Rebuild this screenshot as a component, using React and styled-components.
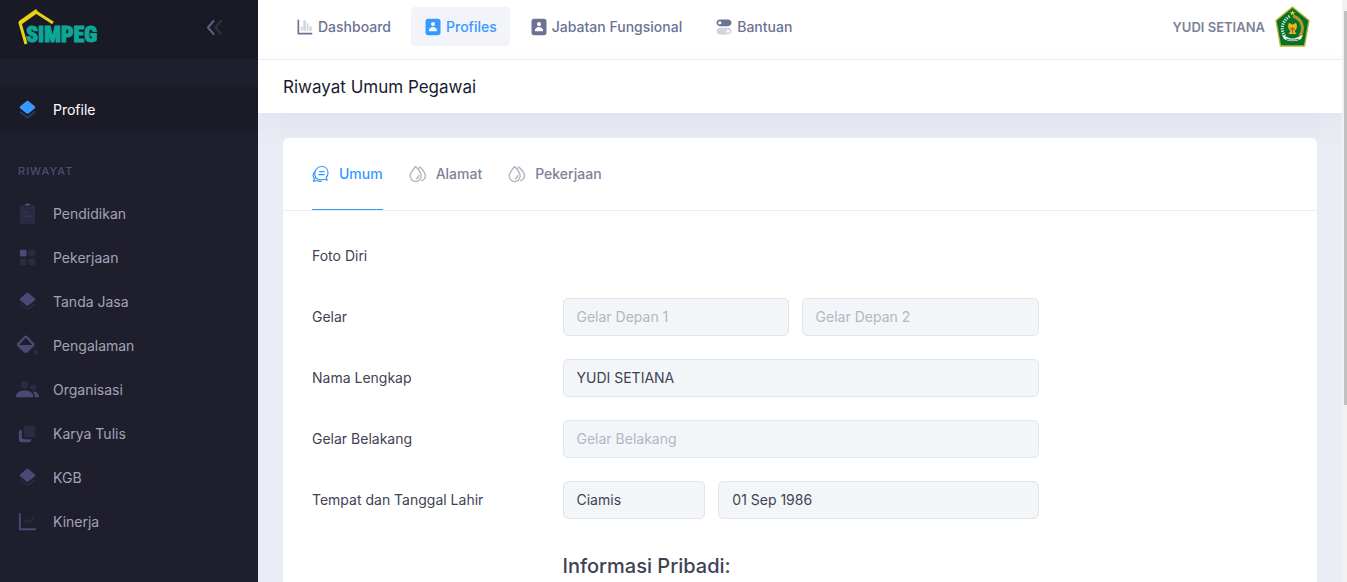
import React from 'react'
import styled, { createGlobalStyle } from 'styled-components'

const GlobalStyle = createGlobalStyle`
    * {
        box-sizing: border-box;
    }
    body {
        margin: 0;
        font-family: Inter, "Open Sans", sans-serif;
        font-size: 14px;
        color: #3f4254;
        background: #eef0f8;
    }
`
const Page = styled.div`
    display: grid;
    grid-template-columns: 258px minmax(0, 1fr) 5px;
    height: 100vh;
    overflow: hidden;
`

/* sidebar */
const Sidebar = styled.aside`
    background: #1e1e2d;
    overflow: hidden;
`
const Brand = styled.div`
    display: flex;
    align-items: center;
    justify-content: space-between;
    height: 59px;
    padding: 0 32px 5px 16px;
    background: #1a1a27;
`
const LogoText = styled.text`
    font-family: "Liberation Sans Narrow", "Roboto Condensed", Roboto, sans-serif;
    font-size: 22px;
    font-weight: 900;
`
const ToggleButton = styled.button`
    display: flex;
    padding: 0;
    border: none;
    background: none;
    color: #5c5e81;
    cursor: pointer;
`
const SideNav = styled.nav`
    padding-top: 28px;
`
const SideLink = styled.a`
    display: flex;
    align-items: center;
    gap: 14px;
    height: 44px;
    padding-left: 16px;
    color: ${props => (props.$active ? '#ffffff' : '#a2a3b7')};
    background: ${props => (props.$active ? '#1b1b28' : 'none')};
    text-decoration: none;

    svg {
        color: ${props => (props.$active ? '#3699ff' : '#494b74')};
    }
`
const SideSection = styled.h4`
    margin: 0;
    padding: 30px 18px 0;
    height: 60px;
    font-size: 11px;
    line-height: 20px;
    font-weight: 500;
    letter-spacing: 1px;
    text-transform: uppercase;
    color: #4c4e6f;
`

/* right side */
const Main = styled.div`
    display: flex;
    flex-direction: column;
    background: #e9ebf5;
    overflow: hidden;
`
const Header = styled.header`
    display: flex;
    align-items: center;
    justify-content: space-between;
    flex-shrink: 0;
    height: 60px;
    padding: 0 32px 6px 25px;
    background: #ffffff;
    border-bottom: 1px solid #ebedf3;
`
const TopNav = styled.nav`
    display: flex;
    gap: 7px;
`
const TopLink = styled.a`
    display: flex;
    align-items: center;
    gap: 3px;
    height: 39px;
    padding: 0 13px 0 12px;
    border-radius: 4px;
    font-weight: 500;
    text-decoration: none;
    color: ${props => (props.$active ? '#3699ff' : '#6c7293')};
    background: ${props => (props.$active ? '#f3f4f9' : 'none')};
`
const User = styled.div`
    display: flex;
    align-items: center;
    gap: 10px;
    font-size: 13px;
    font-weight: 600;
    color: #7e8299;
`
const Subheader = styled.div`
    display: flex;
    align-items: center;
    flex-shrink: 0;
    height: 53px;
    padding: 0 25px;
    background: #ffffff;
    box-shadow: 0 10px 30px 0 rgba(82, 83, 105, 0.05);
`
const PageTitle = styled.h1`
    margin: 0;
    font-size: 17px;
    font-weight: 400;
    color: #181c32;
`
const Card = styled.section`
    flex-shrink: 0;
    margin: 25px;
    background: #ffffff;
    border-radius: 5px;
`
const Tabs = styled.div`
    display: flex;
    gap: 26px;
    height: 73px;
    padding: 0 29px;
    border-bottom: 1px solid #ebedf3;
`
const Tab = styled.button`
    display: flex;
    align-items: center;
    gap: 9px;
    padding: 0;
    border: none;
    border-bottom: 1px solid ${props => (props.$active ? '#3699ff' : 'transparent')};
    background: none;
    font: inherit;
    font-weight: 500;
    color: ${props => (props.$active ? '#3699ff' : '#7e8299')};
    cursor: pointer;

    svg {
        color: ${props => (props.$active ? '#3699ff' : '#b5b5c3')};
    }
`
const Form = styled.form`
    display: flex;
    flex-direction: column;
    gap: 23px;
    padding: 26px 28px 30px 29px;
`
const FormRow = styled.div`
    display: grid;
    grid-template-columns: repeat(4, minmax(0, 1fr));
    column-gap: 25px;
    align-items: center;
    min-height: 38px;
`
const Label = styled.label`
    padding-bottom: 2px;
    color: #3f4254;
    white-space: nowrap;
`
const Fields = styled.div`
    grid-column: 2 / span 2;
    display: flex;
    gap: 13px;
`
const Input = styled.input`
    flex: ${props => (props.$share ? `0 0 ${props.$share}` : '1 1 0')};
    min-width: 0;
    height: 38px;
    padding: 0 13px 2px;
    border: 1px solid #e1e5ec;
    border-radius: 5px;
    background: #f3f6f9;
    font: inherit;
    color: #3f4254;
    outline: none;

    &::placeholder {
        color: #b5b5c3;
    }
`
const FormHeading = styled.h3`
    grid-column: 2 / span 2;
    margin: 10px 0 0;
    font-size: 20px;
    line-height: 28px;
    font-weight: 500;
`

/* scroll track */
const ScrollTrack = styled.div`
    display: flex;
    justify-content: flex-end;
    padding-top: 11px;
    background: #f1f1f1;
`
const ScrollThumb = styled.div`
    width: 3px;
    height: 69%;
    background: #c1c1c1;
`

const Svg = ({ size = 23, children }) => (
    <svg width={size} height={size} viewBox="0 0 24 24" fill="currentColor" aria-hidden="true">
        {children}
    </svg>
)

const LayersIcon = () => (
    <Svg>
        <path d="M12.93 16.07L19.52 10.83C20.17 10.32 20.28 9.37 19.76 8.72L19.52 8.48L12.93 3.24C12.39 2.81 11.61 2.81 11.07 3.24L4.47 8.48C3.83 9 3.72 9.94 4.23 10.59L4.47 10.83L11.07 16.07C11.61 16.51 12.39 16.51 12.93 16.07Z" />
        <path opacity="0.3" d="M11.06 18.67L5.34 14.12C4.95 13.81 4.38 13.88 4.07 14.27C3.75 14.67 3.83 15.24 4.22 15.55L11.09 20.8C11.63 21.21 12.37 21.21 12.91 20.8L19.77 15.56C20.17 15.25 20.25 14.68 19.94 14.28C19.63 13.87 19.05 13.8 18.66 14.11L12.92 18.67C12.38 19.11 11.6 19.11 11.06 18.67Z" />
    </Svg>
)
const ClipboardIcon = () => (
    <Svg>
        <path opacity="0.3" d="M8 3V3.5C8 4.33 8.67 5 9.5 5H14.5C15.33 5 16 4.33 16 3.5V3H18C19.1 3 20 3.9 20 5V21C20 22.1 19.1 23 18 23H6C4.9 23 4 22.1 4 21V5C4 3.9 4.9 3 6 3H8Z" />
        <path d="M11 2C11 1.45 11.45 1 12 1S13 1.45 13 2H14.5C14.78 2 15 2.22 15 2.5V3.5C15 3.78 14.78 4 14.5 4H9.5C9.22 4 9 3.78 9 3.5V2.5C9 2.22 9.22 2 9.5 2H11Z" />
        <rect opacity="0.3" x="7" y="10" width="5" height="2" rx="1" />
        <rect opacity="0.3" x="7" y="14" width="9" height="2" rx="1" />
    </Svg>
)
const BlocksIcon = () => (
    <Svg>
        <rect x="4" y="4" width="7" height="7" rx="1.5" />
        <g opacity="0.3">
            <rect x="13" y="4" width="7" height="7" rx="1.5" />
            <rect x="4" y="13" width="7" height="7" rx="1.5" />
            <rect x="13" y="13" width="7" height="7" rx="1.5" />
        </g>
    </Svg>
)
const BucketIcon = () => (
    <Svg>
        <path fillRule="evenodd" d="M8.8 2.1C9.6 1.3 10.9 1.3 11.7 2.1L18.6 9.4C19.5 10.4 19.5 11.9 18.6 12.9L12.2 19.1C11.1 20.2 9.3 20.2 8.2 19.1L1.6 12.9C.6 11.9.6 10.4 1.6 9.4ZM10.2 3.8L3.2 11.6H17.1Z" />
        <path opacity="0.3" d="M20.5 22C19.1 22 18 20.9 18 19.6C18 18.7 18.8 17.4 20.5 15.5C22.2 17.4 23 18.7 23 19.6C23 20.9 21.9 22 20.5 22Z" />
    </Svg>
)
const GroupIcon = () => (
    <Svg>
        <g opacity="0.3">
            <circle cx="9" cy="7" r="4" />
            <circle cx="18" cy="10" r="3" />
        </g>
        <path d="M0 19.2C.4 15.1 4 13 9 13C14 13 17.7 15 18 19.2C18 20 17.7 20 17.4 20H.6C.3 20 0 19.8 0 19.2Z" />
        <path d="M17.6 14C21 14 23.8 16 24 19.4C24 19.7 24 20 23.5 20H19.6C19.6 17.7 18.9 15.6 17.6 14Z" />
    </Svg>
)
const CopyIcon = () => (
    <Svg>
        <path d="M16 17V18.5C16 19.9 14.9 21 13.5 21H5.5C4.1 21 3 19.9 3 18.5V10.5C3 9.1 4.1 8 5.5 8H6V15.5C6 16.9 7.1 18 8.5 18H16Z" />
        <rect opacity="0.3" x="8" y="4" width="12" height="12" rx="2" />
    </Svg>
)
const LineChartIcon = () => (
    <Svg>
        <path d="M5 19H20C20.6 19 21 19.4 21 20S20.6 21 20 21H4C3.4 21 3 20.6 3 20V4C3 3.4 3.4 3 4 3S5 3.4 5 4Z" />
        <path opacity="0.3" d="M8.7 14.7L7.3 13.3L10.9 9.5L14.2 11.4L18.2 6.3L19.8 7.6L14.9 13.8L11.4 11.8Z" />
    </Svg>
)
const BarChartIcon = () => (
    <Svg size={20}>
        <path d="M5 19H20C20.6 19 21 19.4 21 20S20.6 21 20 21H4C3.4 21 3 20.6 3 20V4C3 3.4 3.4 3 4 3S5 3.4 5 4Z" />
        <g opacity="0.3">
            <rect x="7" y="11" width="2" height="6" rx="1" />
            <rect x="10" y="4" width="3" height="13" rx="1.5" />
            <rect x="14" y="7" width="2" height="10" rx="1" />
            <rect x="17" y="11" width="3" height="6" rx="1.5" />
        </g>
    </Svg>
)
const AddressIcon = () => (
    <Svg size={20}>
        <path fillRule="evenodd" d="M6 2H18C19.7 2 21 3.3 21 5V19C21 20.7 19.7 22 18 22H6C4.3 22 3 20.7 3 19V5C3 3.3 4.3 2 6 2ZM12 6A2.5 2.5 0 1 0 12 11A2.5 2.5 0 1 0 12 6ZM7 16.5C7 17 7.2 17.2 7.7 17.2H16.4C16.8 17.2 17 17 17 16.5C16.8 13.6 14.6 12 12 12C9.4 12 7.2 13.5 7 16.5Z" />
    </Svg>
)
const SwitchIcon = () => (
    <Svg size={20}>
        <path fillRule="evenodd" d="M7 3H17C19.2 3 21 4.8 21 7S19.2 11 17 11H7C4.8 11 3 9.2 3 7S4.8 3 7 3ZM7 5A2 2 0 1 0 7 9A2 2 0 1 0 7 5Z" />
        <path opacity="0.3" fillRule="evenodd" d="M7 13H17C19.2 13 21 14.8 21 17S19.2 21 17 21H7C4.8 21 3 19.2 3 17S4.8 13 7 13ZM17 15A2 2 0 1 0 17 19A2 2 0 1 0 17 15Z" />
    </Svg>
)
const ChevronsIcon = () => (
    <Svg size={24}>
        <g fill="none" stroke="currentColor" strokeWidth="2" strokeLinecap="round" strokeLinejoin="round">
            <path d="M11.5 6L6 12.5L11.5 19" />
            <path opacity="0.35" d="M19 6L13.5 12.5L19 19" />
        </g>
    </Svg>
)
const ChatIcon = () => (
    <svg width="18" height="18" viewBox="0 0 18 18" fill="none" stroke="currentColor" strokeWidth="1.2" strokeLinecap="round" strokeLinejoin="round" aria-hidden="true">
        <path d="M4 13.4C2.6 10.7 2.4 7.6 3.8 5C5.2 2.5 7.3 1.4 10 1.5C13.5 1.7 16 4.3 16 7.8C16 9.8 15.3 11.3 14.2 12.5L15.2 15.3L12 14.3C9 15.3 6.1 14.8 4.2 12.8" />
        <path d="M2.5 6.5C.8 8.9.8 11.5 2.4 13.7L1.5 16.5L4.7 15.5C6.1 16.3 7.6 16.6 9.2 16.3" />
        <path d="M7.5 6.6H12.2M6.7 9.6H12.2" />
    </svg>
)
const DropsIcon = () => (
    <svg width="18" height="18" viewBox="0 0 18 18" fill="none" stroke="currentColor" strokeWidth="1.4" strokeLinecap="round" strokeLinejoin="round" aria-hidden="true">
        <path d="M6.7 1.5C4 4.6 1.2 7.7 1.2 11A5.5 5.5 0 0 0 12.2 11C12.2 7.7 9.4 4.6 6.7 1.5Z" />
        <path d="M9.8 3.4L11 2C13.6 4.7 16.4 7.4 16.4 10.6C16.4 13 15 14.9 12.8 15.5" />
        <path d="M9.7 10.5C9.7 12.2 8.7 13.3 7.4 13.7" />
    </svg>
)
const Logo = () => (
    <svg width="84" height="38" viewBox="0 0 84 38" role="img" aria-label="SIMPEG">
        <path d="M10 36L4 15L20 4L37 15" fill="none" stroke="#e8d40c" strokeWidth="3" />
        <path d="M3 16L3 13L20 1L22 4L20 6L6 16Z" fill="#e8d40c" />
        <LogoText x="10" y="34" fill="#0ba898" stroke="#0ba898" strokeWidth="1">SIMPEG</LogoText>
    </svg>
)
const Emblem = () => (
    <svg width="35" height="41" viewBox="0 0 35 41" role="img" aria-label="Lambang">
        <path d="M17.5 1L34 14.5L29.5 40H5.5L1 14.5Z" fill="#07702b" stroke="#c3b52c" strokeWidth="1.4" strokeLinejoin="round" />
        <path d="M10 30C5 24 7 15 15 10" fill="none" stroke="#dfeed6" strokeWidth="3" strokeDasharray="1.2 1.2" />
        <path d="M18 10C27 13 30 22 25 30" fill="none" stroke="#b09a2a" strokeWidth="3" />
        <path d="M17.5 4L18.3 6.2H20.5L18.7 7.5L19.4 9.6L17.5 8.3L15.6 9.6L16.3 7.5L14.5 6.2H16.7Z" fill="#e9cf22" />
        <path d="M13.5 17.5C15.5 16.5 17 18 17.5 19C18 18 19.5 16.5 21.5 17.5C22.5 21 21.5 24 19.5 25L21.5 28H13.5L15.5 25C13.5 24 12.5 21 13.5 17.5Z" fill="#efb420" />
        <path d="M15 23H20M17.5 21V27" stroke="#7d641b" strokeWidth="1" />
        <path d="M7 29L12 31C16 33 19 33 23 31L28 29L26 33C20 36 15 36 9 33Z" fill="#f5f7ee" />
        <path d="M11 33C16 34.5 19 34.5 24 33" fill="none" stroke="#536d58" strokeWidth="1" />
    </svg>
)

const riwayat = [
    { text: 'Pendidikan', icon: ClipboardIcon },
    { text: 'Pekerjaan', icon: BlocksIcon },
    { text: 'Tanda Jasa', icon: LayersIcon },
    { text: 'Pengalaman', icon: BucketIcon },
    { text: 'Organisasi', icon: GroupIcon },
    { text: 'Karya Tulis', icon: CopyIcon },
    { text: 'KGB', icon: LayersIcon },
    { text: 'Kinerja', icon: LineChartIcon },
]
const topMenu = [
    { text: 'Dashboard', icon: BarChartIcon },
    { text: 'Profiles', icon: AddressIcon, active: true },
    { text: 'Jabatan Fungsional', icon: AddressIcon },
    { text: 'Bantuan', icon: SwitchIcon },
]
const tabs = [
    { text: 'Umum', icon: ChatIcon },
    { text: 'Alamat', icon: DropsIcon },
    { text: 'Pekerjaan', icon: DropsIcon },
]

const App = () => {
    const [tab, setTab] = React.useState('Umum')

    return (
        <>
            <GlobalStyle />
            <Page>
                <Sidebar>
                    <Brand>
                        <Logo />
                        <ToggleButton type="button" aria-label="Tutup menu"><ChevronsIcon /></ToggleButton>
                    </Brand>
                    <SideNav>
                        <SideLink href="#" $active><LayersIcon />Profile</SideLink>
                        <SideSection>Riwayat</SideSection>
                        {riwayat.map(({ text, icon: Icon }) => (
                            <SideLink key={text} href="#"><Icon />{text}</SideLink>
                        ))}
                    </SideNav>
                </Sidebar>
                <Main>
                    <Header>
                        <TopNav>
                            {topMenu.map(({ text, icon: Icon, active }) => (
                                <TopLink key={text} href="#" $active={active}><Icon />{text}</TopLink>
                            ))}
                        </TopNav>
                        <User>YUDI SETIANA<Emblem /></User>
                    </Header>
                    <Subheader>
                        <PageTitle>Riwayat Umum Pegawai</PageTitle>
                    </Subheader>
                    <Card>
                        <Tabs role="tablist">
                            {tabs.map(({ text, icon: Icon }) => (
                                <Tab
                                    key={text}
                                    type="button"
                                    role="tab"
                                    aria-selected={tab === text}
                                    $active={tab === text}
                                    onClick={() => setTab(text)}
                                >
                                    <Icon />{text}
                                </Tab>
                            ))}
                        </Tabs>
                        <Form>
                            <FormRow>
                                <Label as="span">Foto Diri</Label>
                            </FormRow>
                            <FormRow>
                                <Label htmlFor="gelar1">Gelar</Label>
                                <Fields>
                                    <Input id="gelar1" $share="47.5%" placeholder="Gelar Depan 1" />
                                    <Input aria-label="Gelar Depan 2" placeholder="Gelar Depan 2" />
                                </Fields>
                            </FormRow>
                            <FormRow>
                                <Label htmlFor="nama">Nama Lengkap</Label>
                                <Fields>
                                    <Input id="nama" defaultValue="YUDI SETIANA" />
                                </Fields>
                            </FormRow>
                            <FormRow>
                                <Label htmlFor="belakang">Gelar Belakang</Label>
                                <Fields>
                                    <Input id="belakang" placeholder="Gelar Belakang" />
                                </Fields>
                            </FormRow>
                            <FormRow>
                                <Label htmlFor="tempat">Tempat dan Tanggal Lahir</Label>
                                <Fields>
                                    <Input id="tempat" $share="30%" defaultValue="Ciamis" />
                                    <Input aria-label="Tanggal Lahir" defaultValue="01 Sep 1986" />
                                </Fields>
                            </FormRow>
                            <FormRow>
                                <FormHeading>Informasi Pribadi:</FormHeading>
                            </FormRow>
                        </Form>
                    </Card>
                </Main>
                <ScrollTrack>
                    <ScrollThumb />
                </ScrollTrack>
            </Page>
        </>
    )
}

export default App
